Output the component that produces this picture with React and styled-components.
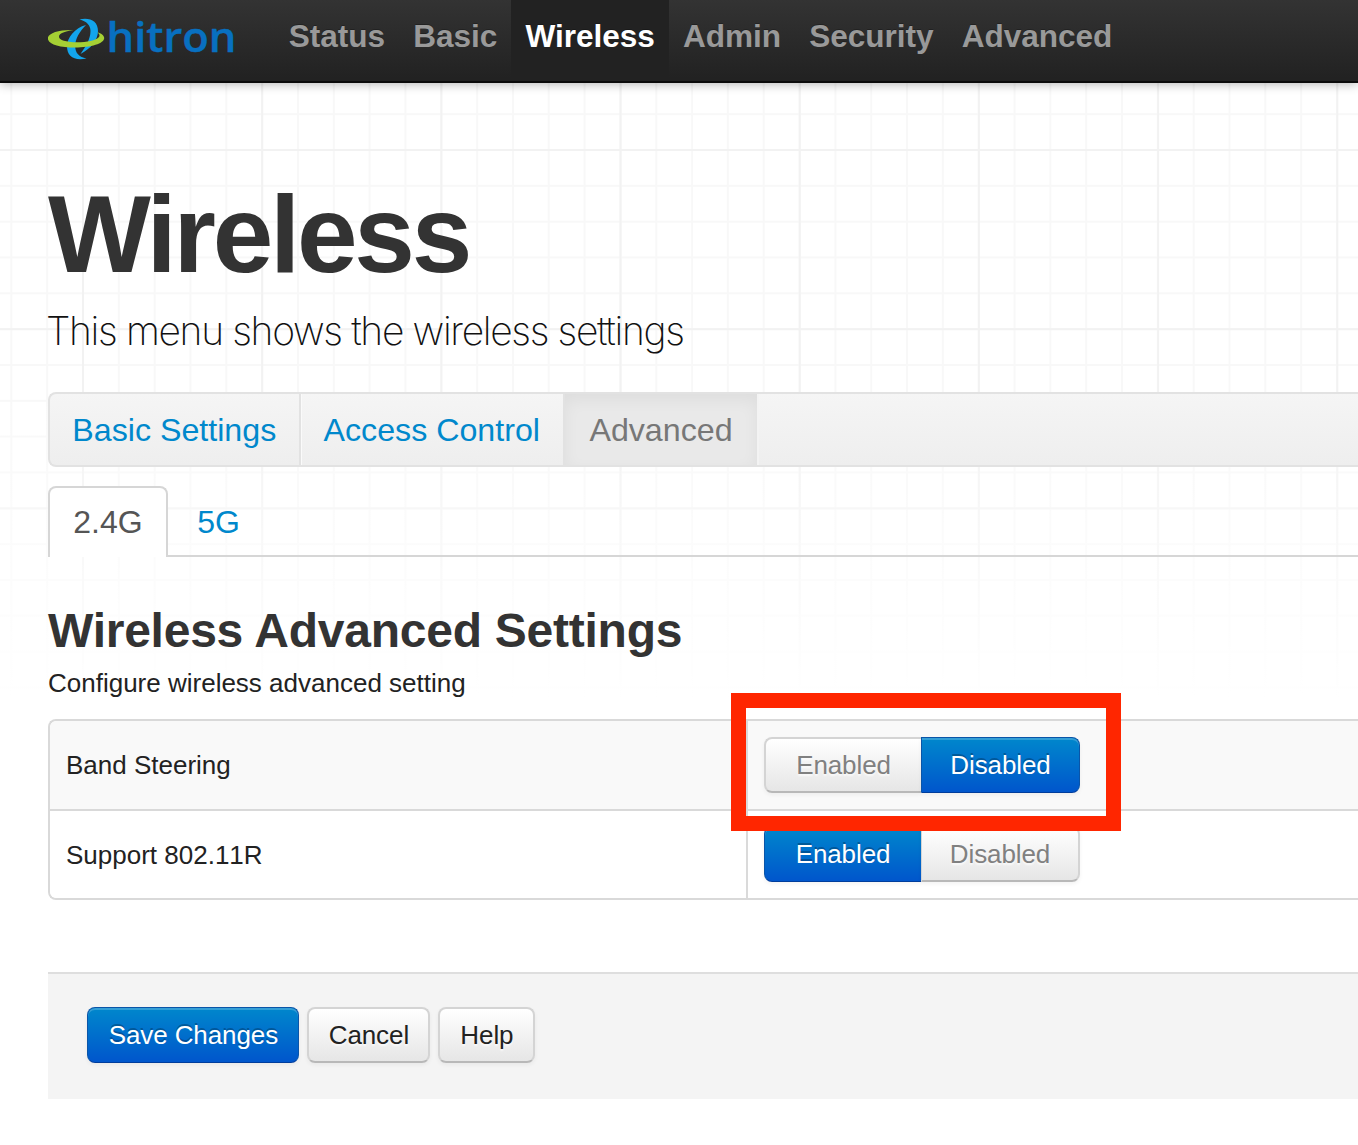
import React from 'react';
import styled, { createGlobalStyle, css } from 'styled-components';

const Global = createGlobalStyle`
  * { box-sizing: border-box; }
  html, body { margin: 0; padding: 0; overflow: hidden; background: #fff; }
  body { font-family: "Liberation Sans", Arial, sans-serif; font-size: 26px; color: #222; }
`;

const Page = styled.div`
  width: 1358px;
  height: 1145px;
  overflow: hidden;
  background-color: #fff;
  background-image:
    linear-gradient(to bottom, rgba(255,255,255,0) 0, rgba(255,255,255,0) 380px, #fff 700px),
    linear-gradient(to right, #f2f2f2 2px, transparent 2px),
    linear-gradient(to bottom, #f2f2f2 2px, transparent 2px),
    linear-gradient(to right, #f8f8f8 2px, transparent 2px),
    linear-gradient(to bottom, #f8f8f8 2px, transparent 2px);
  background-size: 100% 100%, 179.2px 100%, 100% 179.2px, 35.84px 100%, 100% 35.84px;
  background-position: 0 0, 82px 0, 0 149px, 82px 0, 0 149px;
`;

const NavBar = styled.header`
  display: flex;
  height: 83px;
  padding-left: 48px;
  background: linear-gradient(to bottom, #333 0, #222 78px);
  border-bottom: 2px solid #0c0c0c;
  box-shadow: 0 1px 10px rgba(0,0,0,.3);
`;

const Logo = styled.svg`
  flex: none;
  width: 187px;
  height: 64px;
  margin-right: 39.7px;
`;

const NavItem = styled.a`
  height: 79px;
  padding: 17px 14.1px 0;
  font-size: 31.6px;
  line-height: 38px;
  font-weight: bold;
  letter-spacing: -0.05px;
  color: ${p => (p.$active ? '#fff' : '#999')};
  background: ${p => (p.$active ? '#222' : 'none')};
  text-shadow: 0 -1px 0 rgba(0,0,0,.25);
`;

const Content = styled.main`
  padding-left: 48px;
`;

const Title = styled.h1`
  margin: 0;
  padding-top: 95px;
  font-size: 109px;
  line-height: 113px;
  letter-spacing: -3.3px;
  color: #333;
`;

const Subtitle = styled.p`
  margin: 16px 0 0 -2px;
  height: 48px;
  font-family: Inter, "Liberation Sans", sans-serif;
  font-weight: 200;
  font-size: 39px;
  line-height: 48px;
  letter-spacing: -1.35px;
  font-variant-ligatures: none;
  color: #111;
  white-space: nowrap;
`;

const SubNav = styled.nav`
  display: flex;
  height: 75px;
  margin-top: 37px;
  border: 2px solid #e2e2e2;
  border-right: 0;
  border-radius: 8px 0 0 8px;
  background: linear-gradient(to bottom, #f5f5f5, #eee);
`;

const SubNavItem = styled.a`
  width: ${p => p.$width}px;
  font-size: 32.2px;
  line-height: 72px;
  text-align: center;
  color: #0088cc;
  border-right: 2px solid #e2e2e2;
  & + & { box-shadow: inset 1px 0 0 #fafafa; }
  ${p => p.$active && css`
    color: #777;
    background: #e9e9e9;
    border-right-color: #f3f3f3;
    && { box-shadow: inset 0 6px 16px rgba(0,0,0,.05); }
  `}
`;

const Tabs = styled.div`
  display: flex;
  height: 71px;
  margin-top: 19px;
`;

const Tab = styled.a`
  width: ${p => p.$width}px;
  font-size: 32px;
  line-height: 72px;
  text-align: center;
  color: #0088cc;
  border-bottom: 2px solid #d6d6d6;
  ${p => p.$active && css`
    color: #555;
    line-height: 68px;
    background: #fff;
    border: 2px solid #d6d6d6;
    border-bottom: 0;
    border-radius: 8px 8px 0 0;
  `}
`;

const TabRule = styled.div`
  flex: 1;
  border-bottom: 2px solid #d6d6d6;
`;

const SectionTitle = styled.h2`
  margin: 44px 0 0;
  font-size: 48px;
  line-height: 60px;
  letter-spacing: -0.25px;
  color: #333;
`;

const Lead = styled.p`
  margin: 3px 0 0;
  line-height: 38px;
`;

const Settings = styled.div`
  position: relative;
  margin-top: 17px;
  border: 2px solid #d9d9d9;
  border-right: 0;
  border-radius: 8px 0 0 8px;
`;

const SettingLabel = styled.div`
  width: 696px;
  padding-left: 16px;
  line-height: 88px;
  font-kerning: none;
`;

const SettingRow = styled.div`
  display: flex;
  height: 88px;
  background: ${p => (p.$striped ? '#f9f9f9' : '#fff')};
  border-radius: ${p => (p.$striped ? '7px 0 0 0' : '0 0 0 7px')};
  & + & { border-top: 2px solid #d9d9d9; height: 89px; }
  & + & ${SettingLabel} { line-height: 87px; }
`;

const SettingValue = styled.div`
  flex: 1;
  display: flex;
  align-items: center;
  padding: 0 0 1px 16px;
  border-left: 2px solid #dadada;
`;

const Button = styled.button`
  width: ${p => p.$width}px;
  height: 56px;
  padding: 0;
  font-family: inherit;
  font-size: 26px;
  line-height: 50px;
  letter-spacing: -0.1px;
  color: ${p => (p.$muted ? '#808080' : '#222')};
  text-shadow: 0 2px 2px rgba(255,255,255,.75);
  background: linear-gradient(to bottom, #fff, #e6e6e6);
  border: 2px solid #d4d4d4;
  border-bottom-color: #b8b8b8;
  border-radius: 8px;
  box-shadow: 0 2px 4px rgba(0,0,0,.05);
  ${p => p.$primary && css`
    color: #fff;
    text-shadow: 0 -2px 0 rgba(0,0,0,.25);
    background: linear-gradient(to bottom, #0088cc, #0055cc) border-box;
    border: 1px solid #0a55a8;
    border-bottom-color: #003d9c;
    line-height: 52px;
    box-shadow: inset 0 2px 0 rgba(255,255,255,.2), 0 2px 4px rgba(0,0,0,.05);
  `}
`;

const Toggle = styled.div`
  display: flex;
  ${Button}:first-child { border-radius: 8px 0 0 8px; border-right-width: 0; }
  ${Button}:last-child { border-radius: 0 8px 8px 0; border-left-width: 1px; }
`;

const Highlight = styled.div`
  position: absolute;
  left: 681px;
  top: -28px;
  width: 390px;
  height: 138px;
  border: 15px solid #ff2600;
  pointer-events: none;
`;

const Actions = styled.footer`
  display: flex;
  gap: 8px;
  height: 127px;
  margin-top: 72px;
  padding: 33px 0 0 39.4px;
  background: #f4f4f4;
  border-top: 2px solid #dedede;
`;

function HitronLogo() {
  return (
    <Logo viewBox="48 0 187 64" role="img" aria-label="hitron">
      <path d="M79.500 19.300 C90 17 98 21 98 31 C98 40 91 48.500 80.500 54 C86 46 90.500 39 90.500 31 C90.500 25 86.500 21.500 79.500 19.300Z" fill="#12a5ec" />
      <path d="M86 25 C75 27.500 67 38 67 46 C67 56.500 74 61 86.500 58.500 C79 57 75.200 53 75.200 46 C75.200 39 79.500 31.500 86 25Z" fill="#12a5ec" />
      <path d="M73.500 30 C58 29.500 47.800 33.500 47.800 38.500 C48.500 44.500 60 47.500 75 47.500 C91 47.500 104.200 43.500 104.200 38 C104.200 35.300 101 33.200 97.500 32.200 C99.500 34 100 35.500 99 37 C96 40.500 87 42.300 77 42.300 C66 42.300 59 40 59 36.800 C59 33.500 64 31.500 73.500 30Z" fill="#a5d034" />
      <text x="106.500" y="52.300" textLength="130" lengthAdjust="spacingAndGlyphs" fontFamily="'Open Sans', sans-serif" fontWeight="600" fontSize="41" fill="#0870c0" stroke="#0870c0" strokeWidth="0.4">hitron</text>
    </Logo>
  );
}

const navItems = ['Status', 'Basic', 'Wireless', 'Admin', 'Security', 'Advanced'];

export default function App() {
  return (
    <Page>
      <Global />
      <NavBar>
        <HitronLogo />
        {navItems.map(n => (
          <NavItem key={n} $active={n === 'Wireless'}>{n}</NavItem>
        ))}
      </NavBar>
      <Content>
        <Title>Wireless</Title>
        <Subtitle>This menu shows the wireless settings</Subtitle>
        <SubNav>
          <SubNavItem $width={250.5}>Basic Settings</SubNavItem>
          <SubNavItem $width={264.5}>Access Control</SubNavItem>
          <SubNavItem $width={194} $active>Advanced</SubNavItem>
        </SubNav>
        <Tabs>
          <Tab $width={120} $active>2.4G</Tab>
          <Tab $width={101}>5G</Tab>
          <TabRule />
        </Tabs>
        <SectionTitle>Wireless Advanced Settings</SectionTitle>
        <Lead>Configure wireless advanced setting</Lead>
        <Settings>
          <SettingRow $striped>
            <SettingLabel>Band Steering</SettingLabel>
            <SettingValue>
              <Toggle>
                <Button $width={157} $muted>Enabled</Button>
                <Button $width={159} $primary>Disabled</Button>
              </Toggle>
            </SettingValue>
          </SettingRow>
          <SettingRow>
            <SettingLabel>Support 802.11R</SettingLabel>
            <SettingValue>
              <Toggle>
                <Button $width={157} $primary>Enabled</Button>
                <Button $width={159} $muted>Disabled</Button>
              </Toggle>
            </SettingValue>
          </SettingRow>
          <Highlight />
        </Settings>
        <Actions>
          <Button $width={212} $primary>Save Changes</Button>
          <Button $width={123}>Cancel</Button>
          <Button $width={97}>Help</Button>
        </Actions>
      </Content>
    </Page>
  );
}
